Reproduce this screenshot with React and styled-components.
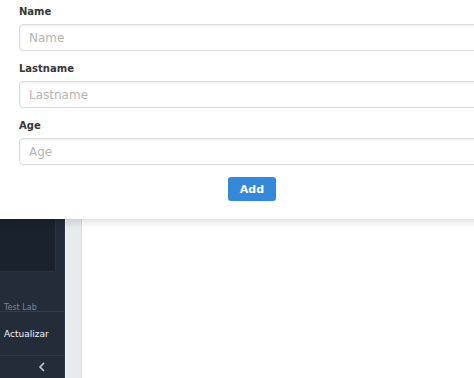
import React from 'react';
import styled, { createGlobalStyle } from 'styled-components';

const GlobalStyle = createGlobalStyle`
  html, body {
    margin: 0;
    padding: 0;
    width: 474px;
    height: 378px;
    overflow: hidden;
    font-family: "DejaVu Sans", Verdana, sans-serif;
  }
`;

const Page = styled.div`
  position: relative;
  display: flex;
  height: 378px;
  overflow: hidden;
  background: #ffffff;
`;

const Sidebar = styled.aside`
  width: 64px;
  flex-shrink: 0;
  display: flex;
  flex-direction: column;
  background: #232c39;
  border-right: 1px solid #2b3442;
`;

const LogoBox = styled.div`
  width: 56px;
  height: 272px;
  background: #1a222d;
  border-right: 1px solid #2a3341;
  border-bottom: 1px solid #2a3341;
  box-sizing: border-box;
`;

const Caption = styled.div`
  margin-top: auto;
  padding: 0 4px;
  height: 10px;
  font-size: 8px;
  line-height: 14px;
  color: #7d8694;
  overflow: hidden;
  border-bottom: 1px solid #323c4a;
`;

const MenuItem = styled.div`
  height: 43px;
  display: flex;
  align-items: center;
  padding: 0 4px;
  font-size: 9px;
  color: #f2f4f7;
  border-bottom: 1px solid #323c4a;
`;

const Collapse = styled.div`
  height: 22px;
  display: flex;
  align-items: center;
  justify-content: flex-end;
  padding-right: 18px;
  color: #c9ced6;
`;

const Gutter = styled.div`
  width: 17px;
  flex-shrink: 0;
  background: #e8ebee;
  border-left: 1px solid #f3f5f7;
  border-right: 1px solid #d9dde2;
  box-sizing: border-box;
`;

const Content = styled.main`
  flex: 1;
  background: #ffffff;
`;

const Modal = styled.div`
  position: absolute;
  top: 0;
  left: 0;
  width: 504px;
  box-sizing: border-box;
  padding: 2px 19px 18px;
  background: #ffffff;
  box-shadow: 0 3px 8px rgba(10, 10, 10, 0.14);
`;

const Field = styled.div`
  margin-bottom: 8px;
`;

const Label = styled.label`
  display: block;
  padding-top: 1px;
  margin-bottom: 3px;
  font-size: 10px;
  line-height: 18px;
  font-weight: bold;
  color: #363636;
`;

const Input = styled.input`
  display: block;
  width: 100%;
  height: 27px;
  box-sizing: border-box;
  padding: 0 9px;
  border: 1px solid #dbdbdb;
  border-radius: 4px;
  box-shadow: inset 0 1px 2px rgba(10, 10, 10, 0.08);
  font-family: "DejaVu Sans", Verdana, sans-serif;
  font-size: 12px;
  color: #363636;
  outline: none;

  &::placeholder {
    color: #b5b5b5;
  }
`;

const Actions = styled.div`
  display: flex;
  justify-content: center;
  padding-top: 4px;
`;

const Button = styled.button`
  height: 24px;
  padding: 0 12px;
  border: none;
  border-radius: 3px;
  background: #3488d8;
  color: #ffffff;
  font-family: "DejaVu Sans", Verdana, sans-serif;
  font-size: 11px;
  font-weight: bold;
  cursor: pointer;
`;

const Chevron = () => (
  <svg width="8" height="10" viewBox="0 0 8 10" fill="none">
    <path d="M6 1 L2 5 L6 9" stroke="currentColor" strokeWidth="1.6" />
  </svg>
);

const fields = ['Name', 'Lastname', 'Age'];

export default function App() {
  return (
    <>
      <GlobalStyle />
      <Page>
        <Sidebar>
          <LogoBox />
          <Caption>Test Lab</Caption>
          <MenuItem>Actualizar</MenuItem>
          <Collapse>
            <Chevron />
          </Collapse>
        </Sidebar>
        <Gutter />
        <Content />
        <Modal>
          {fields.map(f => (
            <Field key={f}>
              <Label>{f}</Label>
              <Input placeholder={f} />
            </Field>
          ))}
          <Actions>
            <Button>Add</Button>
          </Actions>
        </Modal>
      </Page>
    </>
  );
}
